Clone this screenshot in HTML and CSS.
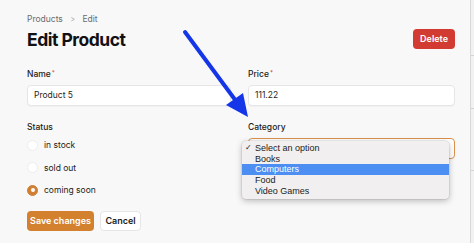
FILE: index.html
```html
<!DOCTYPE html>
<html lang="en">
<head>
<meta charset="utf-8">
<title>Edit Product</title>
<link rel="stylesheet" href="styles.css">
</head>
<body>
<div class="screen">
  <main class="main">
    <header class="header">
      <div class="titles">
        <nav class="crumbs"><span>Products</span><span class="sep">&gt;</span><span>Edit</span></nav>
        <h1 class="title">Edit Product</h1>
      </div>
      <button class="btn btn-danger">Delete</button>
    </header>

    <form class="form">
      <div class="field">
        <label class="label">Name<sup class="req">*</sup></label>
        <div class="input">Product 5</div>
      </div>
      <div class="field">
        <label class="label">Price<sup class="req">*</sup></label>
        <div class="input">111.22</div>
      </div>
      <div class="field">
        <label class="label">Status</label>
        <div class="radios">
          <div class="radio-row"><span class="radio"></span><span>in stock</span></div>
          <div class="radio-row"><span class="radio"></span><span>sold out</span></div>
          <div class="radio-row"><span class="radio checked"></span><span>coming soon</span></div>
        </div>
      </div>
      <div class="field">
        <label class="label">Category</label>
        <div class="select-wrap">
          <div class="input select"></div>
          <ul class="menu">
            <li class="opt"><span class="check">✓</span>Select an option</li>
            <li class="opt">Books</li>
            <li class="opt active">Computers</li>
            <li class="opt">Food</li>
            <li class="opt">Video Games</li>
          </ul>
        </div>
      </div>
    </form>

    <div class="actions">
      <button class="btn btn-primary">Save changes</button>
      <button class="btn btn-plain">Cancel</button>
    </div>

    <svg class="arrow" width="474" height="248" viewBox="0 0 474 248">
      <line x1="185" y1="32" x2="236" y2="101" stroke="#1536e8" stroke-width="4" stroke-linecap="round"/>
      <polygon points="248,117 226,105 243,93" fill="#1536e8"/>
    </svg>
  </main>
  <aside class="side">
    <div class="side-line l1"></div>
    <div class="side-line l2"></div>
    <div class="side-line l3"></div>
  </aside>
</div>
</body>
</html>
```

FILE: styles.css
```css
* { box-sizing: border-box; }
html, body { margin: 0; padding: 0; }
body {
  width: 474px;
  height: 248px;
  background: #ffffff;
  font-family: Inter, "Noto Sans", sans-serif;
  color: #1d1d1f;
  overflow: hidden;
}
.screen {
  display: flex;
  height: 243px;
}
.main {
  position: relative;
  width: 470px;
  height: 243px;
  background: #f8f8f8;
  padding: 13px 15px 0 27px;
}
.side {
  position: relative;
  width: 4px;
  background: #f2f2f2;
  border-left: 1px solid #d8d8d8;
}
.side-line { position: absolute; left: 0; right: 0; height: 1px; background: #d4d4d4; }
.side-line.l1 { top: 55px; }
.side-line.l2 { top: 108px; }
.side-line.l3 { top: 170px; }

.header {
  display: flex;
  justify-content: space-between;
  align-items: flex-end;
}
.crumbs {
  display: flex;
  gap: 7px;
  font-size: 8.5px;
  color: #6b6b70;
  line-height: 12px;
}
.crumbs .sep { color: #a8a8ae; transform: scaleX(0.8); }
.title {
  margin: 3px 0 0;
  font-size: 17.5px;
  font-weight: 700;
  letter-spacing: -0.5px;
  line-height: 24px;
  color: #111114;
}
.btn {
  font-family: Inter, "Noto Sans", sans-serif;
  font-size: 9px;
  font-weight: 600;
  border-radius: 4px;
  height: 20px;
  padding: 0 7px;
  border: 0;
  line-height: 20px;
}
.btn-danger {
  background: #d13b31;
  color: #fff;
  margin-bottom: 3px;
  padding: 0 7px;
}
.form {
  display: grid;
  grid-template-columns: 204px 207px;
  column-gap: 17px;
  row-gap: 15px;
  margin-top: 16px;
}
.field { display: flex; flex-direction: column; }
.label {
  font-size: 8.5px;
  font-weight: 500;
  line-height: 12px;
  color: #1d1d20;
  margin-bottom: 5px;
}
.req { color: #d13b31; font-size: 6px; vertical-align: top; position: relative; top: -1px; margin-left: 1px; }
.input {
  height: 21px;
  background: #fff;
  border: 1px solid #e6e6e8;
  border-radius: 4px;
  font-size: 8.5px;
  line-height: 19px;
  padding: 0 6px;
  color: #1f1f22;
  box-shadow: 0 1px 1px rgba(0,0,0,0.03);
}
.radios { display: flex; flex-direction: column; gap: 8.5px; margin-top: 0px; }
.radio-row {
  display: flex;
  align-items: center;
  gap: 6px;
  font-size: 8.5px;
  line-height: 14px;
  color: #1d1d20;
}
.radio {
  width: 11px;
  height: 11px;
  border-radius: 50%;
  background: #fff;
  border: 1px solid #ededee;
  margin-left: 0px;
}
.radio.checked {
  background: #d17f33;
  border-color: #d17f33;
  position: relative;
}
.radio.checked::after {
  content: "";
  position: absolute;
  left: 2.5px; top: 2.5px;
  width: 4px; height: 4px;
  border-radius: 50%;
  background: #fff;
}
.select-wrap { position: relative; }
.select {
  border: 1px solid #d9914b;
}
.menu {
  position: absolute;
  left: -6px;
  top: 3px;
  width: 207px;
  margin: 0;
  padding: 2px 0 3px;
  list-style: none;
  background: #f1efef;
  border-radius: 4px;
  box-shadow: 0 2px 6px rgba(0,0,0,0.25), 0 0 0 0.5px rgba(0,0,0,0.12);
  font-family: "Liberation Sans", Arial, sans-serif;
  font-size: 9px;
  color: #222;
}
.opt {
  position: relative;
  height: 10.7px;
  line-height: 10.7px;
  padding-left: 13px;
}
.opt .check { position: absolute; left: 3px; font-size: 8px; }
.opt.active { background: #4c8ef2; color: #fff; }
.actions {
  display: flex;
  gap: 6px;
  margin-top: 14px;
}
.btn-primary { background: #d3812f; color: #fff; width: 67px; padding: 0; }
.btn-plain {
  background: #fff;
  color: #1d1d20;
  border: 1px solid #e6e6e8;
  width: 41px;
  padding: 0;
  line-height: 18px;
}
.arrow {
  position: absolute;
  left: 0;
  top: 0;
  pointer-events: none;
}
```
